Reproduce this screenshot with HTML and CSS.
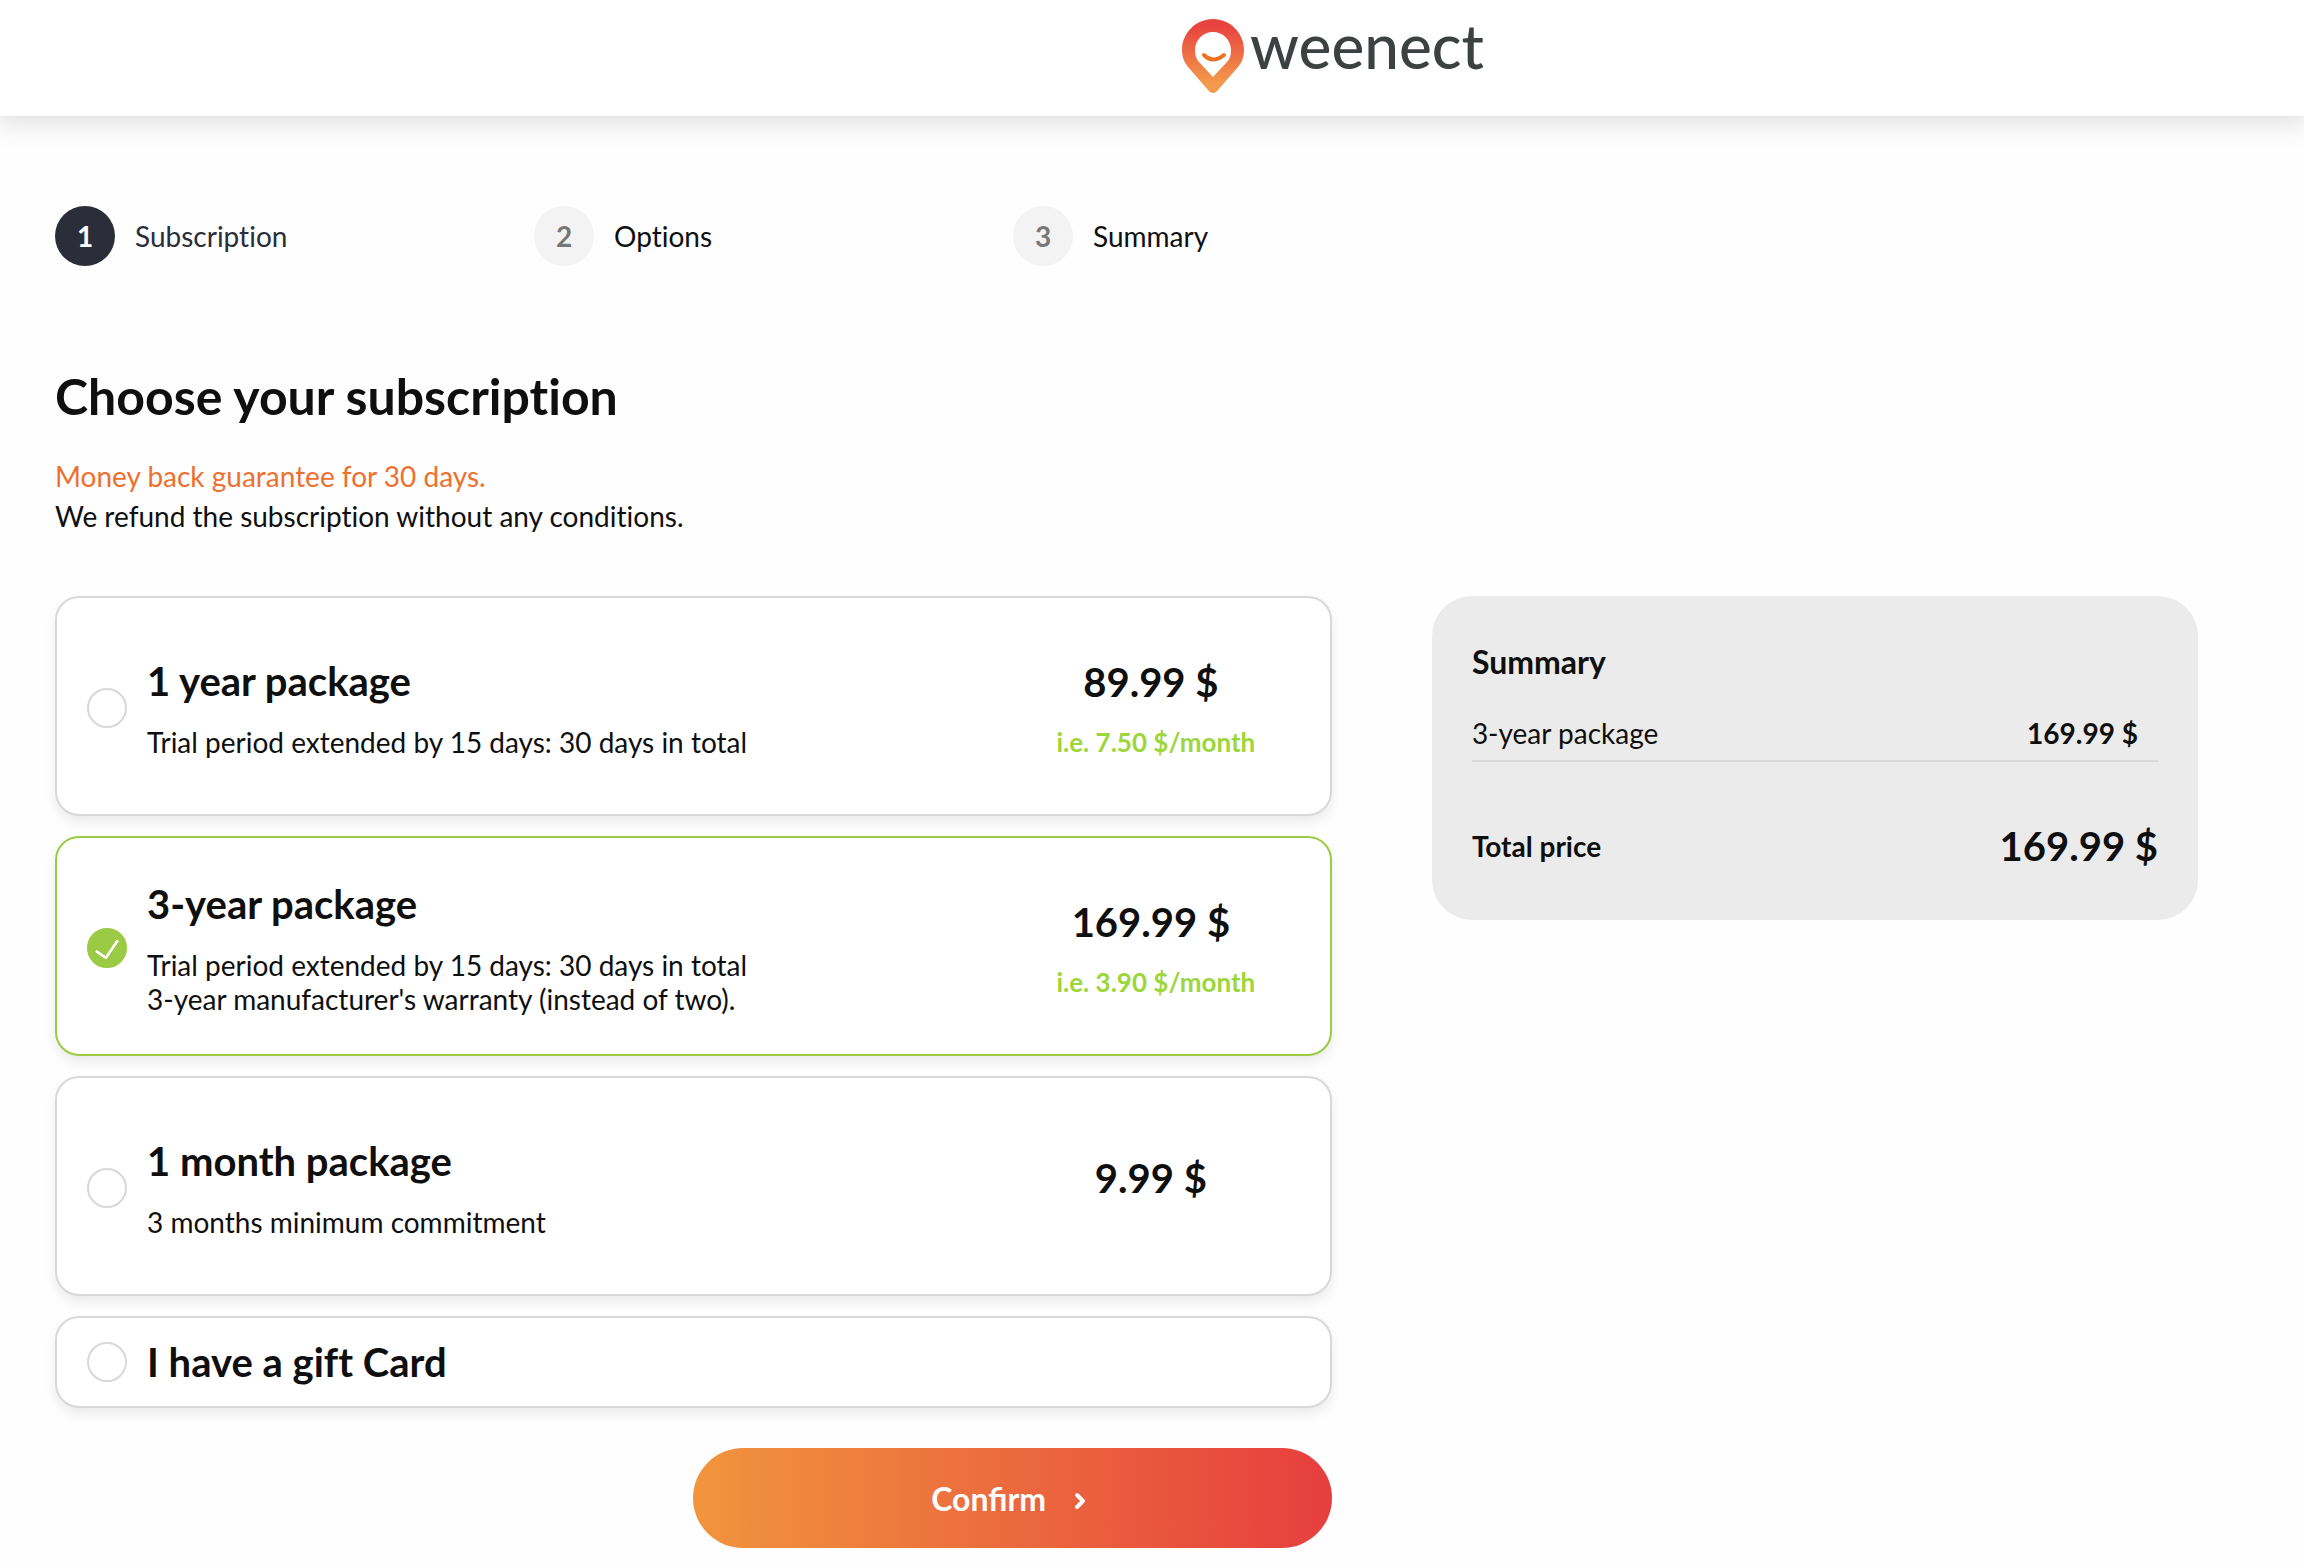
FILE: index.html
```html
<!DOCTYPE html>
<html lang="en">
	<head>
		<meta charset="utf-8" />
		<title>Weenect - Choose your subscription</title>
		<link rel="stylesheet" href="styles.css">
	</head>
	<body>
		<header class="header">
			<a class="logo" href="#">
				<svg class="logo_pin" viewBox="0 0 62 74" aria-hidden="true">
					<defs>
						<linearGradient id="pin" x1="0" y1="0" x2="0" y2="1">
							<stop offset="0.1" stop-color="#e8433f"/>
							<stop offset="0.85" stop-color="#f3994b"/>
						</linearGradient>
					</defs>
					<path fill="url(#pin)" fill-rule="evenodd" d="M31 0C14 0 0 14 0 31c0 7 2 12 6 17l20 23c3 4 7 4 10 0l20-23c4-5 6-10 6-17C62 14 48 0 31 0zM31 13c10 0 18 8 18 18 0 5-1 9-4 12L31 58 17 43c-3-3-4-7-4-12 0-10 8-18 18-18z"/>
					<path fill="none" stroke="#ee7023" stroke-width="4" stroke-linecap="round" d="M22 36q9 9 20 0"/>
				</svg>
				<span class="logo_text">weenect</span>
			</a>
		</header>

		<main class="page">
			<!-- steps -->
			<ol class="steps">
				<li class="step active"><span class="num">1</span>Subscription</li>
				<li class="step"><span class="num">2</span>Options</li>
				<li class="step"><span class="num">3</span>Summary</li>
			</ol>

			<h1>Choose your subscription</h1>
			<p class="intro"><span class="orange">Money back guarantee for 30 days.</span><br>We refund the subscription without any conditions.</p>

			<div class="columns">
				<form class="offers">
					<div class="offer">
						<input type="radio" name="offer" id="offer1">
						<label for="offer1">
							<span class="infos">
								<strong class="name">1 year package</strong>
								<span class="desc">Trial period extended by 15 days: 30 days in total</span>
							</span>
							<span class="prices">
								<strong class="price">89.99 $</strong>
								<span class="month">i.e. 7.50 $/month</span>
							</span>
						</label>
					</div>
					<div class="offer">
						<input type="radio" name="offer" id="offer2" checked>
						<label for="offer2">
							<span class="infos">
								<strong class="name">3-year package</strong>
								<span class="desc">Trial period extended by 15 days: 30 days in total<br>3-year manufacturer's warranty (instead of two).</span>
							</span>
							<span class="prices">
								<strong class="price">169.99 $</strong>
								<span class="month">i.e. 3.90 $/month</span>
							</span>
						</label>
					</div>
					<div class="offer">
						<input type="radio" name="offer" id="offer3">
						<label for="offer3">
							<span class="infos">
								<strong class="name">1 month package</strong>
								<span class="desc">3 months minimum commitment</span>
							</span>
							<span class="prices">
								<strong class="price">9.99 $</strong>
							</span>
						</label>
					</div>
					<div class="offer gift">
						<input type="radio" name="offer" id="offer4">
						<label for="offer4"><strong class="name">I have a gift Card</strong></label>
					</div>
					<button class="confirm" type="submit">
						Confirm
						<svg class="arrow" viewBox="0 0 12 18" aria-hidden="true"><path d="M3 3l6 6-6 6"/></svg>
					</button>
				</form>

				<aside class="summary">
					<h2>Summary</h2>
					<div class="line">
						<span>3-year package</span>
						<strong>169.99 $</strong>
					</div>
					<div class="total">
						<strong>Total price</strong>
						<strong class="amount">169.99 $</strong>
					</div>
				</aside>
			</div>
		</main>
	</body>
</html>
```
FILE: styles.css
```css
*{box-sizing: border-box;}
body,h1,h2,p,ol{margin: 0;padding: 0;}
body{background: #fefefe;color: #0f0f0f;font-family: Lato,"Open Sans",sans-serif;font-size: 28px;line-height: 34px;font-variant-ligatures: none;}
strong,h1,h2{font-weight: 700;}

.header{height: 116px;padding: 19px 0 0 362px;background: #fff;box-shadow: 0 0 26px 6px rgba(0,0,0,0.13);display: flex;justify-content: center;}
.logo{display: flex;gap: 6px;height: 74px;color: #3c4141;text-decoration: none;}
.logo_pin{width: 62px;height: 74px;}
.logo_text{font-size: 62px;font-weight: 500;line-height: 52px;}

.page{padding: 90px 106px 20px 55px;}
.steps{display: flex;list-style: none;}
.step{display: flex;align-items: center;gap: 20px;width: 479px;}
.step .num{width: 60px;height: 60px;border-radius: 50%;background: #f3f3f3;color: #777;font-weight: 700;line-height: 60px;text-align: center;}
.step.active{color: #2b2e38;}
.step.active .num{background: #2b2e38;color: #fff;}

h1{margin-top: 100px;font-size: 50px;line-height: 60px;}
.intro{margin: 30px 0 60px;line-height: 40px;}
.orange{color: #ee702e;}

.columns{display: grid;grid-template-columns: 5fr 3fr;gap: 100px;align-items: start;}
.offers{display: flex;flex-direction: column;gap: 20px;}
.offer{display: flex;align-items: center;gap: 20px;min-height: 220px;padding: 4px 0 0 30px;border: 2px solid #d8d8d8;border-radius: 24px;background: #fff;box-shadow: 0 6px 12px rgba(0,0,0,0.08);}
.offer:has(input:checked){border-color: #9bca45;}
.offer input{appearance: none;flex: none;width: 40px;height: 40px;margin: 0;border: 2px solid #d8d8d8;border-radius: 50%;background: #fff;display: grid;place-items: center;}
.offer input:checked{border-color: #9bca45;background: #9bca45;}
/* white tick */
.offer input:checked:before{content: "";width: 11px;height: 20px;margin-bottom: 4px;border: solid #fff;border-width: 0 3px 3px 0;border-radius: 1px;transform: rotate(34deg);}
.offer label{flex: 1;display: flex;align-items: center;cursor: pointer;}
.infos{flex: 1;}
.name,.price,.desc,.month{display: block;}
.name,.price{font-size: 40px;line-height: 48px;}
.desc{margin-top: 20px;}
.prices{width: 348px;text-align: center;}
.price{padding-right: 10px;margin-bottom: 20px;}
.month{color: #9cd63b;font-size: 26px;font-weight: 700;line-height: 32px;}
.gift{min-height: 92px;padding-top: 0;}

.confirm{display: flex;align-items: center;justify-content: center;gap: 28px;width: 50%;height: 100px;margin-top: 20px;padding: 0 8px 0 0;align-self: flex-end;border: 0;border-radius: 50px;background: linear-gradient(90deg,#f1953d,#e63e3e);color: #fff;font-family: inherit;font-size: 32px;font-weight: 700;font-variant-ligatures: normal;cursor: pointer;}
.arrow{width: 12px;height: 18px;margin-top: 6px;}
.arrow path{fill: none;stroke: #fff;stroke-width: 4;stroke-linecap: round;stroke-linejoin: round;}

.summary{padding: 46px 40px 50px;border-radius: 40px;background: #ebebeb;}
.summary h2{font-size: 32px;line-height: 40px;}
.line,.total{display: flex;align-items: center;justify-content: space-between;}
.line{margin-top: 34px;padding: 0 20px 10px 0;border-bottom: 2px solid #d8d8d8;}
.total{margin-top: 60px;}
.amount{font-size: 40px;line-height: 48px;}
```
